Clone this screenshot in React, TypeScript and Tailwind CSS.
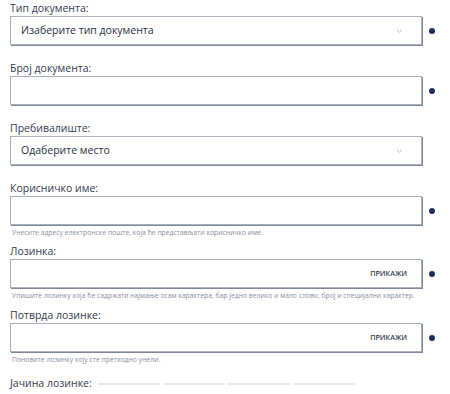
import React from 'react';

const font = { fontFamily: '"Open Sans", "Noto Sans", sans-serif' };

function Chevron() {
  return (
    <svg width="7" height="4" viewBox="0 0 7 4" className="mr-[18px]">
      <path d="M1 0.8l2.5 2.4 2.5-2.4" fill="none" stroke="#a7adb8" strokeWidth="0.9" />
    </svg>
  );
}

interface FieldProps {
  label: string;
  value?: string;
  select?: boolean;
  show?: boolean;
  dot?: boolean;
  hint?: string;
  className?: string;
}

function Field({ label, value, select, show, dot = true, hint, className = '' }: FieldProps) {
  return (
    <div className={className}>
      <div className="h-[14px] mb-[1px] text-[10.5px] leading-[14px] text-[#343b51]">{label}</div>
      <div className="flex items-center">
        <div className="w-[412px] h-[29px] flex items-center justify-between border border-[#a9b0bd] shadow-[1px_1px_0_#7f899b] bg-white">
          <span className="pl-[10px] text-[10.5px] font-medium text-[#2a3145]">{value}</span>
          {select && <Chevron />}
          {show && (
            <span className="pr-[14px] text-[7.2px] font-semibold text-[#343b51]">ПРИКАЖИ</span>
          )}
        </div>
        {dot && <div className="ml-[7px] w-[6px] h-[6px] rounded-full bg-[#1d2d5a]" />}
      </div>
      {hint && (
        <div className="mt-[3px] h-[10px] pl-[2px] text-[6.8px] leading-[10px] text-[#8a909c]">{hint}</div>
      )}
    </div>
  );
}

export default function App() {
  return (
    <div className="w-[450px] h-[394px] overflow-hidden bg-white px-[10px] pt-[1px]" style={font}>
      <Field label="Тип документа:" value="Изаберите тип документа" select />
      <Field label="Број документа:" className="mt-[16px]" />
      <Field label="Пребивалиште:" value="Одаберите место" select dot={false} className="mt-[16px]" />
      <Field
        label="Корисничко име:"
        className="mt-[16px]"
        hint="Унесите адресу електронске поште, која ће представљати корисничко име."
      />
      <Field
        label="Лозинка:"
        show
        className="mt-[6px]"
        hint="Упишите лозинку која ће садржати најмање осам карактера, бар једно велико и мало слово, број и специјални карактер."
      />
      <Field
        label="Потврда лозинке:"
        show
        className="mt-[7px]"
        hint="Поновите лозинку коју сте претходно унели."
      />
      <div className="mt-[12px] flex items-center h-[14px]">
        <span className="w-[88px] text-[10.5px] text-[#343b51]">Јачина лозинке:</span>
        <div className="flex gap-[3px]">
          <div className="w-[62px] h-[2px] bg-[#e6e8ec]" />
          <div className="w-[62px] h-[2px] bg-[#e6e8ec]" />
          <div className="w-[62px] h-[2px] bg-[#e6e8ec]" />
          <div className="w-[62px] h-[2px] bg-[#e6e8ec]" />
        </div>
      </div>
    </div>
  );
}
